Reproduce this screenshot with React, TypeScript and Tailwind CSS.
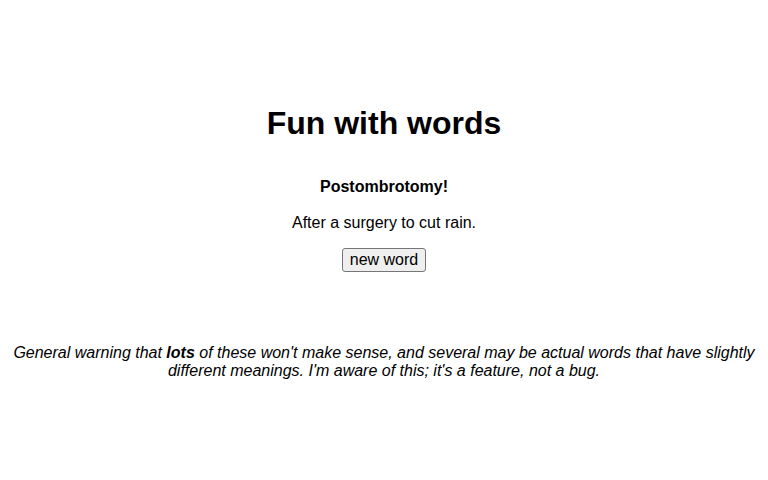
import React, { useState } from 'react';

const words = [
  { word: 'Postombrotomy!', meaning: 'After a surgery to cut rain.' },
  { word: 'Prehydrocide!', meaning: 'Before the killing of water.' },
  { word: 'Antilithology!', meaning: 'Against the study of stones.' },
];

const App: React.FC = () => {
  const [index, setIndex] = useState(0);
  const current = words[index];

  return (
    <div className="min-h-screen bg-white px-2 text-center text-black font-['Liberation_Sans',Arial,sans-serif] text-[16px] leading-[18px]">
      <h1 className="pt-[105px] text-[32px] font-bold leading-[37px]">Fun with words</h1>

      <p className="mt-[36px] font-bold">{current.word}</p>
      <p className="mt-[18px]">{current.meaning}</p>

      <button
        onClick={() => setIndex((index + 1) % words.length)}
        className="mt-[16px] rounded-[3px] border border-[#767676] bg-[#efefef] px-[7px] py-[2px] leading-[18px] text-black hover:bg-[#e5e5e5]"
      >
        new word
      </button>

      <p className="mt-[72px] italic">
        General warning that <b>lots</b> of these won't make sense, and several may be actual words that have
        slightly different meanings. I'm aware of this; it's a feature, not a bug.
      </p>
    </div>
  );
};

export default App;
